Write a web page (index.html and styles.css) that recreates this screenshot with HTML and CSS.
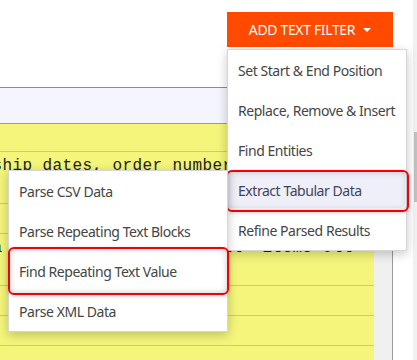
FILE: index.html
```html
<!DOCTYPE html>
<html lang="en">
<head>
<meta charset="utf-8">
<title>Text filters</title>
<link rel="stylesheet" href="styles.css">
</head>
<body>
<div class="page">
  <div class="main">
    <div class="toolbar">
      <div class="filter">
        <button class="btn" type="button">ADD TEXT FILTER<span class="caret"></span></button>
        <ul class="menu menu-filter">
          <li class="item"><span class="label">Set Start &amp; End Position</span></li>
          <li class="item"><span class="label">Replace, Remove &amp; Insert</span></li>
          <li class="item"><span class="label">Find Entities</span></li>
          <li class="item item-mark item-hover"><span class="label">Extract Tabular Data</span></li>
          <li class="item"><span class="label">Refine Parsed Results</span></li>
        </ul>
      </div>
    </div>
    <div class="panel">
      <div class="panel-head"></div>
      <div class="panel-body">
        <div class="lines">
          <div class="row row-first"></div>
          <div class="row row-double">List ship dates, order numbers</div>
          <div class="row"> </div>
          <div class="row row-double">Find a pattern to validate all  items oll</div>
          <div class="row"> </div>
          <div class="row"> </div>
          <div class="row"> </div>
        </div>
        <div class="vscroll"></div>
      </div>
    </div>
    <ul class="menu menu-parse">
      <li class="item"><span class="label">Parse CSV Data</span></li>
      <li class="item"><span class="label">Parse Repeating Text Blocks</span></li>
      <li class="item item-mark item-mark-b"><span class="label">Find Repeating Text Value</span></li>
      <li class="item"><span class="label">Parse XML Data</span></li>
    </ul>
  </div>
  <div class="scrollbar"><div class="thumb"></div></div>
</div>
</body>
</html>
```

FILE: styles.css
```css
* { box-sizing: border-box; }
html, body { margin: 0; padding: 0; }
body {
  width: 417px;
  height: 360px;
  overflow: hidden;
  background: #ffffff;
  font-family: "Noto Sans", "Open Sans", sans-serif;
}
.page {
  display: flex;
  height: 360px;
}
.main {
  position: relative;
  flex: 1;
  min-width: 0;
  height: 360px;
  display: flex;
  flex-direction: column;
}
.toolbar {
  flex: none;
  height: 87px;
  padding: 12px 20px 0 0;
  display: flex;
  justify-content: flex-end;
  align-items: flex-start;
}
.filter {
  position: relative;
}
.btn {
  width: 166px;
  height: 35px;
  border: 0;
  margin: 0;
  padding: 0;
  background: #ff4a00;
  color: #ffffff;
  font-family: "Noto Sans", "Open Sans", sans-serif;
  font-size: 14px;
  display: flex;
  align-items: center;
  justify-content: center;
  gap: 8px;
  letter-spacing: -0.35px;
}
.caret {
  width: 0;
  height: 0;
  border-left: 4px solid transparent;
  border-right: 4px solid transparent;
  border-top: 4px solid #ffffff;
}
.menu {
  list-style: none;
  margin: 0;
  padding: 0;
  background: #ffffff;
  border: 1px solid #d6d6d6;
  box-shadow: 0 3px 10px rgba(0, 0, 0, 0.22);
  position: absolute;
  z-index: 5;
}
.menu-filter {
  top: 37px;
  left: 0;
  width: 180px;
}
.menu-parse {
  top: 170px;
  left: 8px;
  width: 220px;
}
.item {
  position: relative;
  height: 40px;
  padding-left: 10px;
  display: flex;
  align-items: center;
  font-size: 14px;
  color: #454545;
  white-space: nowrap;
  letter-spacing: -0.45px;
}
.label {
  position: relative;
  z-index: 1;
}
.item-mark::after {
  content: "";
  position: absolute;
  z-index: 2;
  border: 2px solid #f2000a;
  border-radius: 6px;
  box-shadow: inset 0 0 6px rgba(0, 0, 0, 0.22), 0 1px 4px rgba(0, 0, 0, 0.18);
  left: -2px;
  top: 0;
  width: 179px;
  height: 38px;
}
.item-hover::before {
  content: "";
  position: absolute;
  z-index: 0;
  left: -2px;
  top: 0;
  width: 179px;
  height: 38px;
  border-radius: 6px;
  background: #eeeff8;
}
.item-hover .label { color: #40445a; }
.item-mark-b::after {
  left: -1px;
  top: -4px;
  width: 217px;
  height: 44px;
}
.panel {
  flex: 1;
  min-height: 0;
  display: flex;
  flex-direction: column;
  margin-left: -60px;
  margin-right: 20px;
  border-top: 1px solid #8c8c8c;
  border-right: 1px solid #9a9a9a;
}
.panel-head {
  flex: none;
  height: 36px;
  background: #f5f5fd;
  border-bottom: 1px solid #9a9a9a;
}
.panel-body {
  flex: 1;
  min-height: 0;
  display: flex;
}
.lines {
  flex: 1;
  background: #f4f57a;
  overflow: hidden;
}
.row {
  height: 30px;
  border-bottom: 1px solid #cbc78a;
  padding: 3px 0 4px 2.5px;
  font-family: "Liberation Mono", monospace;
  font-size: 16px;
  letter-spacing: 0.4px;
  line-height: 22px;
  white-space: pre;
  color: #222222;
  overflow: hidden;
}
.row-double {
  height: 52px;
}
.row-first {
  height: 28px;
  padding: 0;
}
.vscroll {
  width: 18px;
  background: #f0f0f0;
}
.scrollbar {
  width: 4px;
  background: #f1f1f1;
  padding-top: 132px;
}
.thumb {
  margin-left: 1px;
  width: 3px;
  height: 70px;
  background: #c1c1c1;
}
```
